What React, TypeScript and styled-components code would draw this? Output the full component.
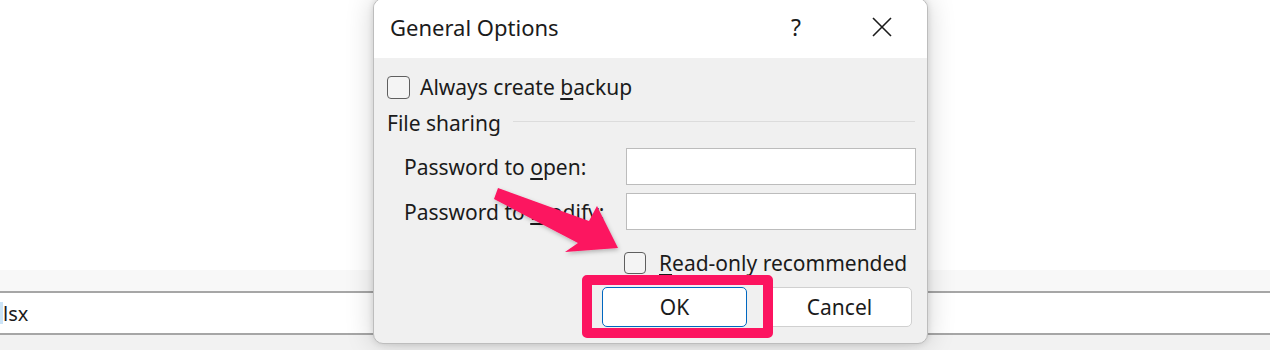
import React from "react";
import styled, { createGlobalStyle } from "styled-components";

const GlobalStyle = createGlobalStyle`
  html, body { margin: 0; padding: 0; background: #ffffff; }
  body { font-family: "Noto Sans", "Open Sans", sans-serif; color: #1b1b1b; }
  * { box-sizing: border-box; }
`;

const Page = styled.div`
  position: relative;
  width: 1270px;
  height: 350px;
  overflow: hidden;
  display: flex;
  flex-direction: column;
  background: #ffffff;
`;

const TopArea = styled.div`
  height: 270px;
  background: #ffffff;
`;

const Band = styled.div`
  height: 21px;
  background: #f8f8f8;
`;

const FieldRow = styled.div`
  height: 44px;
  border-top: 2px solid #a6a6a6;
  border-bottom: 2px solid #a6a6a6;
  background: #ffffff;
  display: flex;
  align-items: center;
  font-size: 20px;
  color: #1b1b1b;
`;

const Selected = styled.span`
  background: #cce4f7;
  width: 3px;
  height: 22px;
  display: inline-block;
`;

const Bottom = styled.div`
  flex: 1;
  background: #f2f2f2;
`;

const Dialog = styled.div`
  position: absolute;
  left: 373px;
  top: -2px;
  width: 555px;
  height: 346px;
  border-radius: 10px;
  border: 1px solid #bdbdbd;
  overflow: hidden;
  display: flex;
  flex-direction: column;
  background: #f0f0f0;
  box-shadow: 0 0 28px rgba(0, 0, 0, 0.18), 0 0 6px rgba(0, 0, 0, 0.12);
`;

const TitleBar = styled.div`
  height: 59px;
  flex: none;
  background: #ffffff;
  display: flex;
  align-items: center;
  padding: 0 0 4px 16px;
`;

const Title = styled.div`
  flex: 1;
  font-size: 22px;
  color: #1b1b1b;
`;

const HelpGlyph = styled.div`
  width: 30px;
  text-align: center;
  font-size: 23px;
  color: #1b1b1b;
  margin-right: 59px;
`;

const CloseButton = styled.div`
  width: 24px;
  height: 24px;
  margin-right: 33px;
  display: flex;
  align-items: center;
  justify-content: center;
`;

const Body = styled.div`
  flex: 1;
  display: flex;
  flex-direction: column;
  padding: 15px 12px 0 13px;
`;

const CheckRow = styled.label<{ $indent?: number; $height: number; $gap: number; $top?: number }>`
  display: flex;
  align-items: center;
  gap: ${(p) => p.$gap}px;
  height: ${(p) => p.$height}px;
  margin-top: ${(p) => p.$top ?? 0}px;
  padding-left: ${(p) => p.$indent ?? 0}px;
  font-size: 21px;
  color: #1b1b1b;
`;

const CheckBox = styled.span<{ $size: number }>`
  width: ${(p) => p.$size}px;
  height: ${(p) => p.$size}px;
  border: 1.5px solid #5f5f5f;
  border-radius: 4px;
  background: #f4f4f4;
  flex: none;
`;

const Key = styled.u`
  text-decoration-thickness: 1.5px;
  text-underline-offset: 3px;
`;

const GroupHeader = styled.div`
  display: flex;
  align-items: center;
  gap: 12px;
  height: 24px;
  margin-top: 10px;
  font-size: 21px;
  color: #1b1b1b;
`;

const GroupLine = styled.div`
  flex: 1;
  height: 1px;
  background: #dcdcdc;
  margin-top: -3px;
`;

const FieldGrid = styled.div`
  display: grid;
  grid-template-columns: 239px 290px;
  grid-auto-rows: 37px;
  row-gap: 8px;
  margin-top: 13px;
`;

const FieldLabel = styled.div`
  padding-left: 17px;
  display: flex;
  align-items: center;
  font-size: 21px;
  color: #1b1b1b;
`;

const TextBox = styled.div`
  background: #ffffff;
  border: 1.5px solid #bcbcbc;
`;

const ButtonRow = styled.div`
  display: flex;
  justify-content: flex-end;
  gap: 20px;
  margin-top: 11px;
  padding-right: 3px;
`;

const Button = styled.div<{ $primary?: boolean }>`
  width: 145px;
  height: 40px;
  border-radius: 5px;
  background: #ffffff;
  border: ${(p) => (p.$primary ? "1.5px solid #0067c0" : "1px solid #d0d0d0")};
  display: flex;
  align-items: center;
  justify-content: center;
  font-size: 21px;
  color: #1b1b1b;
`;

const Highlight = styled.div`
  position: absolute;
  left: 582px;
  top: 275px;
  width: 191px;
  height: 63px;
  border: 10px solid #fc1460;
  border-radius: 5px;
`;

const ArrowSvg = styled.svg`
  position: absolute;
  left: 0;
  top: 0;
  pointer-events: none;
`;

export default function App() {
  return (
    <>
      <GlobalStyle />
      <Page>
        <TopArea />
        <Band />
        <FieldRow>
          <Selected />
          lsx
        </FieldRow>
        <Bottom />

        <Dialog>
          <TitleBar>
            <Title>General Options</Title>
            <HelpGlyph>?</HelpGlyph>
            <CloseButton>
              <svg width="22" height="22" viewBox="0 0 22 22">
                <path d="M2 2 L20 20 M20 2 L2 20" stroke="#1b1b1b" strokeWidth="1.6" fill="none" />
              </svg>
            </CloseButton>
          </TitleBar>
          <Body>
            <CheckRow $height={28} $gap={10}>
              <CheckBox $size={23} />
              <span>
                Always create <Key>b</Key>ackup
              </span>
            </CheckRow>
            <GroupHeader>
              <span>File sharing</span>
              <GroupLine />
            </GroupHeader>
            <FieldGrid>
              <FieldLabel>
                <span>
                  Password to <Key>o</Key>pen:
                </span>
              </FieldLabel>
              <TextBox />
              <FieldLabel>
                <span>
                  Password to <Key>m</Key>odify:
                </span>
              </FieldLabel>
              <TextBox />
            </FieldGrid>
            <CheckRow $height={26} $indent={237} $gap={13} $top={20}>
              <CheckBox $size={22} />
              <span>
                <Key>R</Key>ead-only recommended
              </span>
            </CheckRow>
            <ButtonRow>
              <Button $primary>OK</Button>
              <Button>Cancel</Button>
            </ButtonRow>
          </Body>
        </Dialog>

        <ArrowSvg width="1270" height="350" viewBox="0 0 1270 350">
          <defs>
            <filter id="arrowShadow" x="-20%" y="-20%" width="140%" height="140%">
              <feDropShadow dx="1" dy="2" stdDeviation="2" floodColor="#000" floodOpacity="0.25" />
            </filter>
          </defs>
          <polygon
            points="498,188 589,221 597,206 618,248 565,252 578,243 494,199"
            fill="#fc1460"
            filter="url(#arrowShadow)"
          />
        </ArrowSvg>
        <Highlight />
      </Page>
    </>
  );
}
